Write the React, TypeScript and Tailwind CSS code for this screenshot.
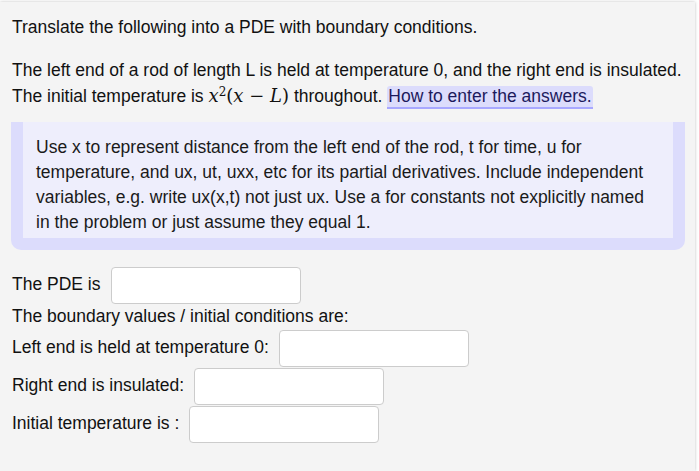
import React from 'react';

const Field: React.FC<{ label: string; className?: string }> = ({ label, className = '' }) => (
  <div className={`flex items-center h-[37px] ${className}`}>
    <span>{label}</span>
    <input
      type="text"
      className="ml-[10px] w-[190px] h-[37px] bg-white border border-[#cccccc] rounded-[4px] outline-none"
    />
  </div>
);

export default function App() {
  return (
    <div className="min-h-screen bg-white overflow-hidden">
      <div
        className="mt-[2px] w-[695px] min-h-[469px] bg-[#f4f4f4] shadow-[0_0_3px_rgba(0,0,0,0.25)] pl-[12px] pr-[12px] pt-[13px] text-[17.5px] leading-[25.6px] text-[#111]"
        style={{ fontFamily: '"Liberation Sans", Arial, sans-serif' }}
      >
        {/* Question */}
        <p className="mb-[17px] whitespace-nowrap">Translate the following into a PDE with boundary conditions.</p>
        <p className="mb-[12px] whitespace-nowrap">
          The left end of a rod of length L is held at temperature 0, and the right end is insulated.
          <br />
          The initial temperature is{' '}
          <span className="text-[18px]" style={{ fontFamily: '"DejaVu Serif", "Liberation Serif", serif' }}>
            <i>x</i>
            <sup className="text-[12px] not-italic">2</sup>(<i>x</i> − <i>L</i>)
          </span>{' '}
          throughout.{' '}
          <a className="bg-[#dcdcfc] text-[#1c1a5c] border-b-2 border-[#a8a8ff] rounded-t-[3px] px-[1px] pb-[1px]">
            How to enter the answers.
          </a>
        </p>

        {/* Hint box */}
        <div className="bg-[#dcdcfc] px-[12px] pb-[12px] rounded-b-[10px] w-[674px] -ml-[1px]">
          <div className="bg-[#eeeefc] pl-[13px] pr-[10px] pt-[13px] pb-[3px] leading-[25px] text-[#1a1a1a] whitespace-nowrap">
            Use x to represent distance from the left end of the rod, t for time, u for
            <br />
            temperature, and ux, ut, uxx, etc for its partial derivatives. Include independent
            <br />
            variables, e.g. write ux(x,t) not just ux. Use a for constants not explicitly named
            <br />
            in the problem or just assume they equal 1.
          </div>
        </div>

        {/* Answers */}
        <div className="mt-[17px]">
          <Field label="The PDE is" />
          <div className="h-[26px] flex items-center">The boundary values / initial conditions are:</div>
          <Field label="Left end is held at temperature 0:" />
          <Field label="Right end is insulated:" className="mt-[1px]" />
          <Field label="Initial temperature is :" className="mt-[1px]" />
        </div>
      </div>
    </div>
  );
}
